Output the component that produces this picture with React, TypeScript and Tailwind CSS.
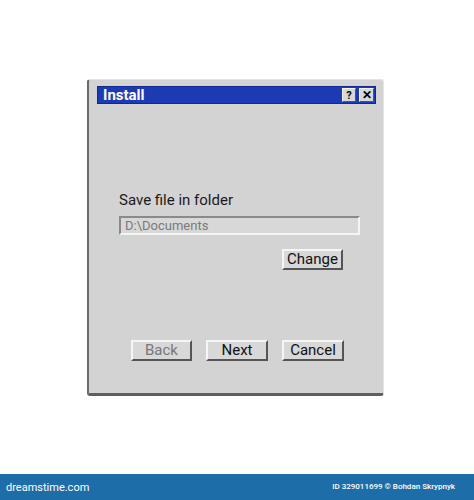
export default function App() {
  const font = { fontFamily: 'Roboto, "Liberation Sans", sans-serif' }
  return (
    <div className="w-[474px] h-[500px] bg-white flex flex-col" style={font}>
      <div className="flex-1 pt-[79px] pl-[87px]">
        {/* dialog */}
        <div className="w-[297px] h-[317px] bg-[#d3d3d3] border-t border-r border-[#e4e4e4] border-l-2 border-l-[#6a6a6a] border-b-[3px] border-b-[#5e5e5e] rounded-[3px] flex flex-col">
          <div className="mt-[6px] ml-[8px] mr-[7px] h-[18px] bg-[#1d3ab5] border border-[#0e2a8f] flex items-center justify-between pl-[5px] pr-[1px]">
            <span className="text-white text-[15px] font-bold leading-none">Install</span>
            <div className="flex gap-[3px]">
              <span className="w-[14px] h-[14px] bg-[#d8d8d8] border border-[#f4f4f4] border-b-[#555] border-r-[#555] flex items-center justify-center text-[11px] font-bold leading-none text-black">?</span>
              <span className="w-[15px] h-[14px] bg-[#d8d8d8] border border-[#f4f4f4] border-b-[#555] border-r-[#555] flex items-center justify-center text-[12px] font-bold leading-none text-black">✕</span>
            </div>
          </div>

          <div className="pl-[30px] pt-[87px]">
            <div className="text-[15px] leading-[18px] text-[#1a1a1a]">Save file in folder</div>
            <div className="mt-[7px] w-[241px] h-[19px] bg-[#d8d8d8] border-2 border-[#f4f4f4] border-t-[#8a8a8a] border-l-[#8a8a8a] flex items-center pl-[4px] text-[13px] text-[#7a7a7a] leading-none">
              D:\Documents
            </div>
            <div className="flex justify-end w-[224px] mt-[14px]">
              <button className="w-[61px] h-[21px] bg-[#d8d8d8] border-2 border-[#f6f6f6] border-b-[#555] border-r-[#555] text-[15px] leading-none text-[#111]">
                Change
              </button>
            </div>
          </div>

          <div className="flex gap-[14px] pl-[42px] mt-[70px]">
            <button className="w-[61px] h-[21px] bg-[#d8d8d8] border-2 border-[#f6f6f6] border-b-[#555] border-r-[#555] text-[15px] leading-none text-[#777]">
              Back
            </button>
            <button className="w-[62px] h-[21px] bg-[#d8d8d8] border-2 border-[#f6f6f6] border-b-[#555] border-r-[#555] text-[15px] leading-none text-[#111]">
              Next
            </button>
            <button className="w-[62px] h-[21px] bg-[#d8d8d8] border-2 border-[#f6f6f6] border-b-[#555] border-r-[#555] text-[15px] leading-none text-[#111]">
              Cancel
            </button>
          </div>
        </div>
      </div>

      {/* footer bar */}
      <div className="h-[26px] bg-[#1d6ea8] flex items-center justify-between pl-[6px] pr-[19px]">
        <span className="text-white text-[11px] leading-none">dreamstime.com</span>
        <span className="text-white text-[8px] font-medium leading-none">
          ID 329011699 © Bohdan Skrypnyk
        </span>
      </div>
    </div>
  )
}
